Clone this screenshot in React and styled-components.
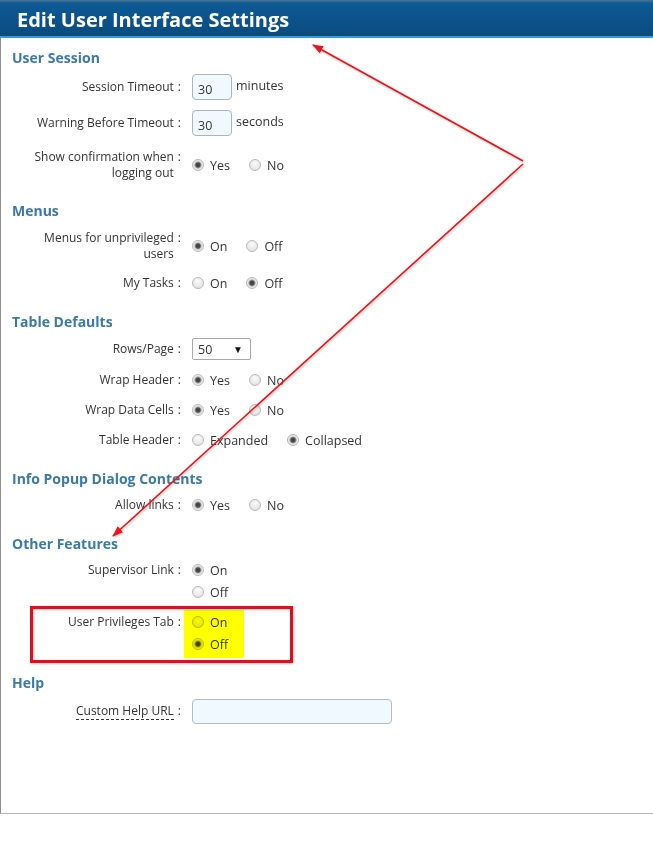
import React from "react";
import styled, { createGlobalStyle } from "styled-components";

const GlobalStyle = createGlobalStyle`
  body {
    margin: 0;
    background: #fff;
    font-family: "Open Sans", "Liberation Sans", sans-serif;
    color: #333;
  }
`;

const sections = [
    {
        title: "User Session",
        rows: [
            { label: "Session Timeout", type: "number", value: "30", unit: "minutes" },
            { label: "Warning Before Timeout", type: "number", value: "30", unit: "seconds" },
            { label: "Show confirmation when logging out", type: "radio", options: ["Yes", "No"], checked: 0, tall: true },
        ],
    },
    {
        title: "Menus",
        rows: [
            { label: "Menus for unprivileged users", type: "radio", options: ["On", "Off"], checked: 0, tall: true },
            { label: "My Tasks", type: "radio", options: ["On", "Off"], checked: 1 },
        ],
    },
    {
        title: "Table Defaults",
        rows: [
            { label: "Rows/Page", type: "select", value: "50" },
            { label: "Wrap Header", type: "radio", options: ["Yes", "No"], checked: 0 },
            { label: "Wrap Data Cells", type: "radio", options: ["Yes", "No"], checked: 0 },
            { label: "Table Header", type: "radio", options: ["Expanded", "Collapsed"], checked: 1 },
        ],
    },
    {
        title: "Info Popup Dialog Contents",
        rows: [{ label: "Allow links", type: "radio", options: ["Yes", "No"], checked: 0 }],
    },
    {
        title: "Other Features",
        rows: [
            { label: "Supervisor Link", type: "radio", options: ["On", "Off"], checked: 0, stacked: true },
            { label: "User Privileges Tab", type: "radio", options: ["On", "Off"], checked: 1, stacked: true },
        ],
    },
    {
        title: "Help",
        rows: [{ label: "Custom Help URL", type: "url", hint: true }],
    },
];

const Control = ({ row }) => {
    if (row.type === "number") {
        return (
            <Options>
                <NumberInput defaultValue={row.value} />
                <Unit>{row.unit}</Unit>
            </Options>
        );
    }
    if (row.type === "select") {
        return (
            <Select>
                <span>{row.value}</span>
                <Caret>▼</Caret>
            </Select>
        );
    }
    if (row.type === "url") {
        return <UrlInput />;
    }
    return (
        <Options stacked={row.stacked}>
            {row.options.map((opt, i) => (
                <Option key={opt}>
                    <Radio checked={i === row.checked} />
                    {opt}
                </Option>
            ))}
        </Options>
    );
};

const App = () => {
    return (
        <Page>
            <GlobalStyle />
            <Header>
                <Title>Edit User Interface Settings</Title>
            </Header>
            <Panel>
                {sections.map((section) => (
                    <Section key={section.title}>
                        <SectionTitle>{section.title}</SectionTitle>
                        {section.rows.map((row) => (
                            <Row key={row.label} tall={row.tall} stacked={row.stacked}>
                                <Label stacked={row.stacked}>
                                    <LabelText hint={row.hint}>{row.label}</LabelText>
                                    <Colon>:</Colon>
                                </Label>
                                <Control row={row} />
                            </Row>
                        ))}
                    </Section>
                ))}
            </Panel>

            {/* annotations drawn over the screenshot */}
            <Annotations viewBox="0 0 653 848" width="653" height="848">
                <defs>
                    <marker id="head" markerWidth="11" markerHeight="8" refX="10" refY="4" orient="auto" markerUnits="userSpaceOnUse">
                        <path d="M0,0 L11,4 L0,8 Z" fill="#e8141a" />
                    </marker>
                    <filter id="soft" x="-5%" y="-5%" width="110%" height="110%">
                        <feDropShadow dx="1" dy="1" stdDeviation="1" floodColor="#000" floodOpacity="0.25" />
                    </filter>
                </defs>
                <rect x="184" y="610" width="60" height="48" fill="#ffff00" style={{ mixBlendMode: "multiply" }} />
                <g stroke="#e8141a" strokeWidth="1.6" fill="none" filter="url(#soft)">
                    <line x1="523" y1="161" x2="313" y2="45" markerEnd="url(#head)" />
                    <line x1="523" y1="164" x2="113" y2="536" markerEnd="url(#head)" />
                </g>
                <rect x="31.5" y="607.5" width="260" height="54" fill="none" stroke="#e3101a" strokeWidth="3" filter="url(#soft)" />
            </Annotations>
        </Page>
    );
};

const Page = styled.div`
  position: relative;
  width: 653px;
  height: 848px;
  overflow: hidden;
`;

const Header = styled.div`
  height: 38px;
  box-sizing: border-box;
  background: linear-gradient(to bottom, #4f7696 0px, #0d5a95 3px, #0a4b80 100%);
  border-bottom: 2px solid #3a9bd0;
  display: flex;
  align-items: center;
  padding: 2px 0 0 17px;
`;

const Title = styled.h1`
  margin: 0;
  font-size: 20px;
  font-weight: bold;
  color: #fff;
`;

const Panel = styled.div`
  height: 776px;
  box-sizing: border-box;
  border-left: 1px solid #8f8f8f;
  border-bottom: 1px solid #b4b4b4;
  padding: 10px 0 0 11px;
`;

const Section = styled.div`
  & + & {
    margin-top: 14px;
  }
`;

const SectionTitle = styled.h2`
  margin: 0 0 1px;
  font-size: 14px;
  line-height: 20px;
  font-weight: bold;
  color: #3b79ab;
`;

const Row = styled.div`
  display: grid;
  grid-template-columns: 171px 1fr;
  column-gap: 9px;
  align-items: ${(props) => (props.stacked ? "start" : "center")};
  padding: ${(props) => (props.tall ? "8px 0 6px" : "5px 0")};
`;

const Label = styled.div`
  display: flex;
  justify-content: flex-end;
  font-size: 12px;
  line-height: 16px;
  padding-top: ${(props) => (props.stacked ? "2px" : "0")};
`;

const LabelText = styled.span`
  max-width: 146px;
  text-align: right;
  align-self: flex-start;
  border-bottom: ${(props) => (props.hint ? "1px dashed #333" : "none")};
`;

const Colon = styled.span`
  margin-left: 4px;
  padding-right: 2px;
`;

const Options = styled.div`
  display: flex;
  flex-direction: ${(props) => (props.stacked ? "column" : "row")};
  align-items: ${(props) => (props.stacked ? "flex-start" : "center")};
  gap: ${(props) => (props.stacked ? "2px" : "19px")};
  font-size: 12.5px;
`;

const Option = styled.label`
  display: flex;
  align-items: center;
  height: 20px;
  gap: 6px;
`;

const Radio = styled.span`
  width: 10px;
  height: 10px;
  border-radius: 50%;
  border: 1px solid #b8b8b8;
  background: ${(props) =>
        props.checked
            ? "radial-gradient(circle, #3d3d3d 0, #4a4a4a 2px, #9a9a9a 3px, #e8e8e8 4px, #f4f4f4 100%)"
            : "radial-gradient(circle at 50% 35%, #fafafa 0, #dedede 100%)"};
`;

const NumberInput = styled.input`
  width: 40px;
  height: 26px;
  box-sizing: border-box;
  border: 1px solid #a9b6c2;
  border-radius: 4px;
  background: #f0f9ff;
  padding: 4px 0 0 5px;
  font: 12.5px "Open Sans", sans-serif;
  color: #333;
`;

const Unit = styled.span`
  margin-left: -15px;
  margin-top: -3px;
`;

const Select = styled.div`
  width: 59px;
  height: 22px;
  box-sizing: border-box;
  border: 1px solid #a8a8a8;
  border-radius: 2px;
  display: flex;
  align-items: center;
  justify-content: space-between;
  padding: 0 7px 0 5px;
  font-size: 12.5px;
  background: #fff;
`;

const Caret = styled.span`
  font-size: 10px;
  color: #111;
`;

const UrlInput = styled.input`
  width: 200px;
  height: 25px;
  box-sizing: border-box;
  border: 1px solid #b3bcc6;
  border-radius: 4px;
  background: #f0f9ff;
`;

const Annotations = styled.svg`
  position: absolute;
  left: 0;
  top: 0;
  pointer-events: none;
`;

export default App;
